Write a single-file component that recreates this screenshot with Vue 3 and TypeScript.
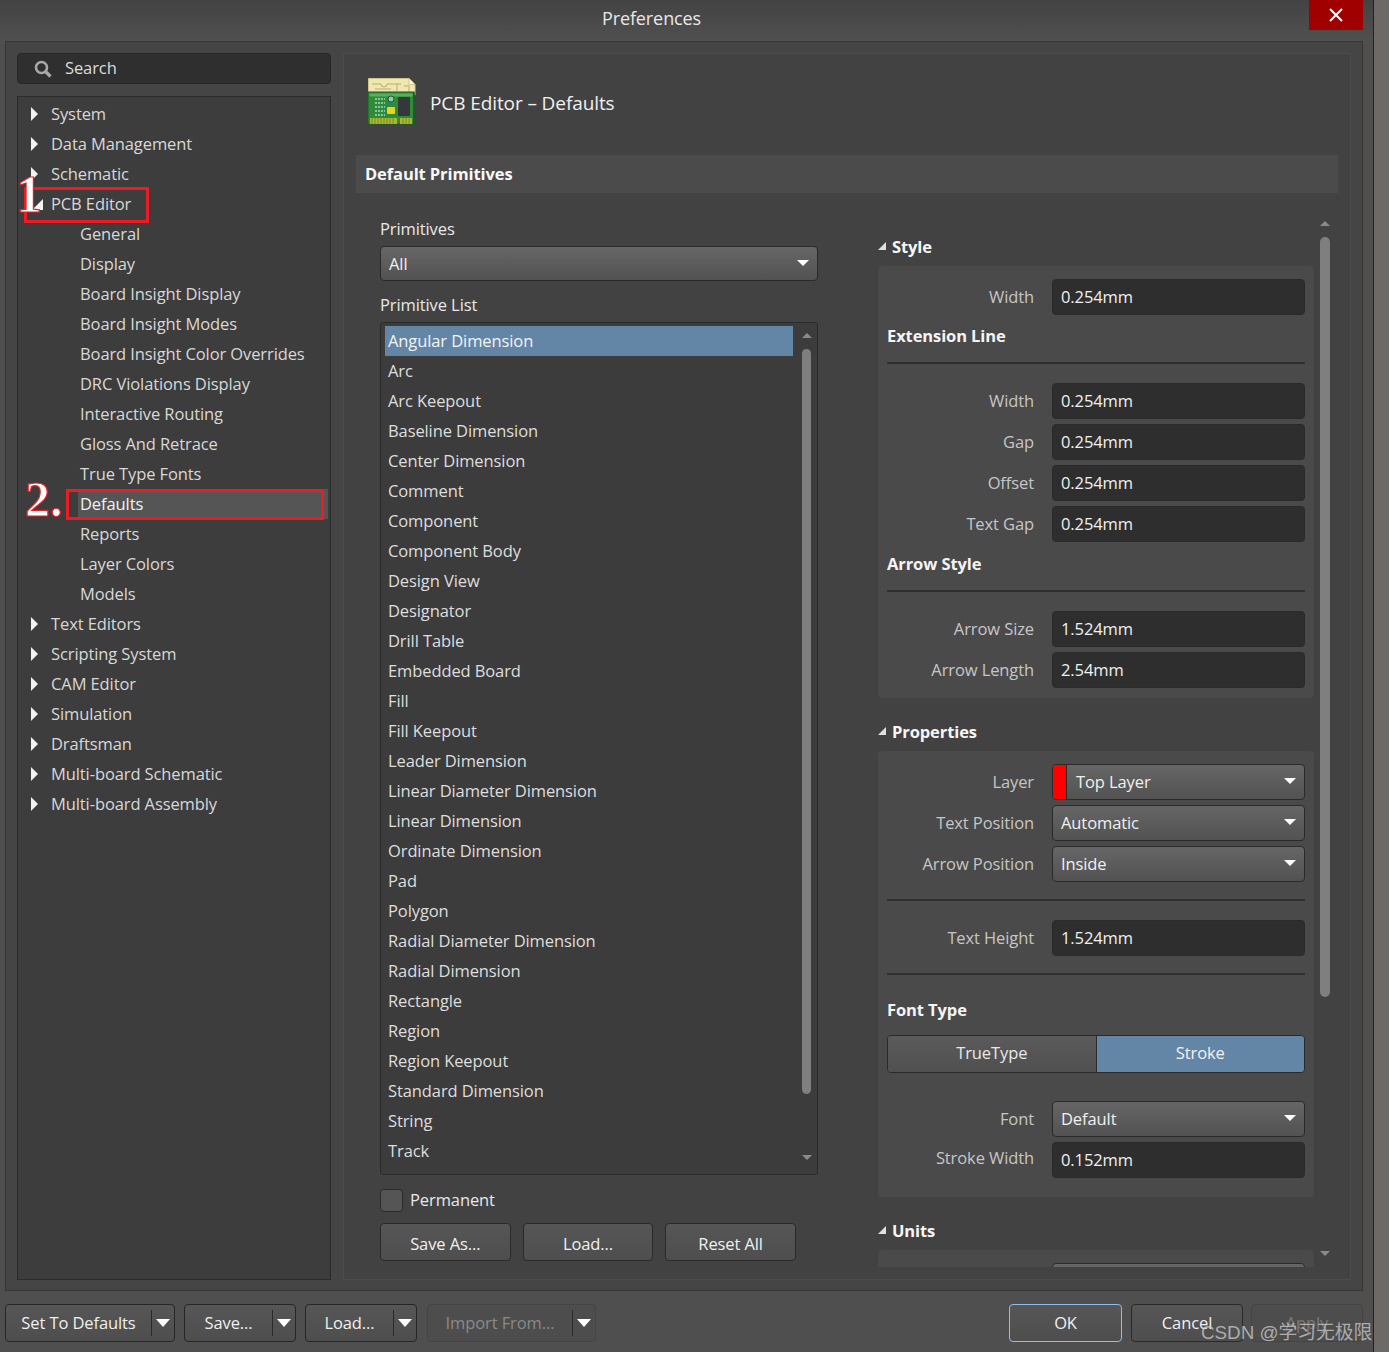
<script setup lang="ts">
interface TreeItem { label: string; level: number; arrow?: 'right' | 'open'; selected?: boolean }
const top1 = ['System', 'Data Management', 'Schematic']
const kids = ['General', 'Display', 'Board Insight Display', 'Board Insight Modes', 'Board Insight Color Overrides', 'DRC Violations Display', 'Interactive Routing', 'Gloss And Retrace', 'True Type Fonts', 'Defaults', 'Reports', 'Layer Colors', 'Models']
const top2 = ['Text Editors', 'Scripting System', 'CAM Editor', 'Simulation', 'Draftsman', 'Multi-board Schematic', 'Multi-board Assembly']
const tree: TreeItem[] = [
  ...top1.map((label) => ({ label, level: 0, arrow: 'right' as const })),
  { label: 'PCB Editor', level: 0, arrow: 'open' },
  ...kids.map((label) => ({ label, level: 1, selected: label === 'Defaults' })),
  ...top2.map((label) => ({ label, level: 0, arrow: 'right' as const })),
]
const primitives = ['Angular Dimension', 'Arc', 'Arc Keepout', 'Baseline Dimension', 'Center Dimension', 'Comment', 'Component', 'Component Body', 'Design View', 'Designator', 'Drill Table', 'Embedded Board', 'Fill', 'Fill Keepout', 'Leader Dimension', 'Linear Diameter Dimension', 'Linear Dimension', 'Ordinate Dimension', 'Pad', 'Polygon', 'Radial Diameter Dimension', 'Radial Dimension', 'Rectangle', 'Region', 'Region Keepout', 'Standard Dimension', 'String', 'Track']
const extRows = [['Width', '0.254mm'], ['Gap', '0.254mm'], ['Offset', '0.254mm'], ['Text Gap', '0.254mm']]
const arrowRows = [['Arrow Size', '1.524mm'], ['Arrow Length', '2.54mm']]
const propRows = [['Text Position', 'Automatic'], ['Arrow Position', 'Inside']]
const leftButtons = [
  { label: 'Set To Defaults', width: 170 },
  { label: 'Save...', width: 112 },
  { label: 'Load...', width: 112 },
  { label: 'Import From...', width: 169, disabled: true },
]
</script>

<template>
  <div class="root">
    <div class="window">
      <header class="titlebar">
        <span class="title">Preferences</span>
        <button class="close" aria-label="Close">
          <svg width="14" height="14" viewBox="0 0 14 14"><path d="M1 1 13 13M13 1 1 13" stroke="#fff" stroke-width="2" fill="none" /></svg>
        </button>
      </header>

      <main class="frame">
        <aside class="side">
          <div class="search">
            <svg width="18" height="18" viewBox="0 0 18 18"><circle cx="7.5" cy="7.5" r="5.5" fill="none" stroke="#a8a8a8" stroke-width="2.6" /><path d="M11.5 11.5 16.5 16.5" stroke="#a8a8a8" stroke-width="3.2" /></svg>
            <span>Search</span>
          </div>
          <nav class="tree">
            <div v-for="item in tree" :key="item.label" class="tree-row" :class="{ child: item.level === 1 }">
              <i v-if="item.arrow" class="tw" :class="item.arrow"></i>
              <span class="tree-label" :class="{ selected: item.selected }">{{ item.label }}</span>
            </div>
          </nav>
        </aside>

        <section class="panel">
          <div class="panel-head">
            <svg class="pcb" width="50" height="50" viewBox="0 0 50 50">
              <path d="M1.5 1.5H42L48 7.5V18H1.5Z" fill="#f0e6b0" stroke="#cfc48c" />
              <path d="M42 1.5V7.5H48" fill="#fff8d8" stroke="#cfc48c" />
              <path d="M5 7H14M20 7H34M14 7a3 3 0 0 0 6 0M30 7V14M37 9H42V15M8 12H24" stroke="#b8ad76" fill="none" />
              <rect x="1" y="15" width="46" height="32" fill="#2f8a3a" stroke="#1f5a25" />
              <rect x="2.5" y="16.5" width="43" height="3" fill="#5cad5c" />
              <path d="M8 22H18M8 26H18M8 30H18M8 34H18M8 38H18" stroke="#9fdcc0" stroke-width="1.4" stroke-dasharray="2 1" />
              <rect x="31" y="20" width="12" height="19" rx="1" fill="#33383a" />
              <rect x="20" y="30" width="8" height="7" rx="1" fill="#e6d420" />
              <circle cx="24" cy="22" r="3" fill="#8fc8c0" stroke="#1f5a25" />
              <rect x="3" y="41" width="27" height="6" fill="#a9b92f" />
              <rect x="33" y="41" width="12" height="6" fill="#a9b92f" />
              <path d="M5 41V47M8 41V47M11 41V47M14 41V47M17 41V47M20 41V47M23 41V47M26 41V47M36 41V47M39 41V47M42 41V47" stroke="#6f8020" stroke-width="0.8" />
              <path d="M47 15V50" stroke="#1f5a25" stroke-width="1.5" />
            </svg>
            <h1>PCB Editor – Defaults</h1>
          </div>
          <div class="section-bar">Default Primitives</div>

          <div class="body">
            <div class="col-left">
              <div class="lbl">Primitives</div>
              <div class="combo first-combo"><span>All</span><i class="caret"></i></div>
              <div class="lbl list-lbl">Primitive List</div>
              <div class="listbox">
                <ul class="items">
                  <li v-for="(p, i) in primitives" :key="p" :class="{ active: i === 0 }">{{ p }}</li>
                </ul>
                <div class="vbar list-bar">
                  <i class="up"></i>
                  <b class="thumb"></b>
                  <i class="down"></i>
                </div>
              </div>
              <label class="check"><i class="box"></i><span>Permanent</span></label>
              <div class="actions">
                <button class="btn">Save As...</button>
                <button class="btn">Load...</button>
                <button class="btn">Reset All</button>
              </div>
            </div>

            <div class="col-right">
              <div class="scroller">
                <h3 class="group first"><i class="tri"></i>Style</h3>
                <div class="card style-card">
                  <div class="row"><label>Width</label><div class="input">0.254mm</div></div>
                  <h4 class="sub">Extension Line</h4>
                  <hr />
                  <div class="rows after-hr">
                    <div v-for="r in extRows" :key="r[0]" class="row"><label>{{ r[0] }}</label><div class="input">{{ r[1] }}</div></div>
                  </div>
                  <h4 class="sub">Arrow Style</h4>
                  <hr />
                  <div class="rows after-hr">
                    <div v-for="r in arrowRows" :key="r[0]" class="row"><label>{{ r[0] }}</label><div class="input">{{ r[1] }}</div></div>
                  </div>
                </div>

                <h3 class="group"><i class="tri"></i>Properties</h3>
                <div class="card prop-card">
                  <div class="rows">
                    <div class="row">
                      <label>Layer</label>
                      <div class="combo layer"><b class="swatch"></b><span>Top Layer</span><i class="caret"></i></div>
                    </div>
                    <div v-for="r in propRows" :key="r[0]" class="row">
                      <label>{{ r[0] }}</label>
                      <div class="combo"><span>{{ r[1] }}</span><i class="caret"></i></div>
                    </div>
                  </div>
                  <hr class="gap-hr" />
                  <div class="row after-hr"><label>Text Height</label><div class="input">1.524mm</div></div>
                  <hr class="gap-hr" />
                  <h4 class="sub font-type">Font Type</h4>
                  <div class="segments">
                    <span>TrueType</span>
                    <span class="on">Stroke</span>
                  </div>
                  <div class="rows font-rows">
                    <div class="row"><label>Font</label><div class="combo"><span>Default</span><i class="caret"></i></div></div>
                    <div class="row lift"><label>Stroke Width</label><div class="input">0.152mm</div></div>
                  </div>
                </div>

                <h3 class="group"><i class="tri"></i>Units</h3>
                <div class="card units-card">
                  <div class="row"><label></label><div class="combo"></div></div>
                </div>
              </div>
              <div class="vbar main-bar">
                <i class="up"></i>
                <b class="thumb"></b>
                <i class="down"></i>
              </div>
            </div>
          </div>
        </section>
      </main>

      <footer class="bottom">
        <div class="bottom-left">
          <div v-for="b in leftButtons" :key="b.label" class="split" :class="{ disabled: b.disabled }" :style="{ width: b.width + 'px' }">
            <span class="split-text">{{ b.label }}</span>
            <span class="split-arrow"><i class="caret"></i></span>
          </div>
        </div>
        <div class="bottom-right">
          <button class="btn foot ok">OK</button>
          <button class="btn foot">Cancel</button>
          <button class="btn foot off">Apply</button>
        </div>
      </footer>
    </div>
    <div class="strip"></div>

    <div class="mark mark-a"></div>
    <div class="mark mark-b"></div>
    <span class="num num-a">1</span>
    <span class="num num-b">2.</span>
    <span class="watermark">CSDN @学习无极限</span>
  </div>
</template>

<style>
html, body { margin: 0; padding: 0; background: #4f4f4f; }
</style>

<style scoped>
* { box-sizing: border-box; }
.root { position: relative; width: 1389px; height: 1352px; display: flex; overflow: hidden; font-family: "Open Sans", "Noto Sans", sans-serif; font-size: 16.5px; letter-spacing: -0.1px; color: #e4e4e4; }
.window { width: 1374px; height: 1352px; display: flex; flex-direction: column; background: #4f4f4f; border-right: 1px solid #222; }
.strip { flex: 1; background: #6d6967; }

.titlebar { position: relative; height: 41px; flex: none; display: flex; justify-content: center; background: linear-gradient(#434343, #505050); }
.title { margin: 6px 0 0 -70px; font-size: 18px; line-height: 24px; color: #e8e8e8; }
.close { position: absolute; left: 1309px; top: 0; width: 54px; height: 30px; padding: 0; border: 0; background: #a00000; display: flex; align-items: center; justify-content: center; }

.frame { width: 1358px; height: 1250px; margin-left: 5px; flex: none; padding: 12px 12px 10px; display: flex; gap: 12px; background: #454545; border: 1px solid #363636; }
.side { width: 314px; margin-left: -1px; margin-top: -1px; flex: none; display: flex; flex-direction: column; gap: 12px; }
.search { height: 31px; display: flex; align-items: center; gap: 13px; padding-left: 16px; background: #2f2f2f; border: 1px solid #262626; border-radius: 4px; color: #dcdcdc; }
.search span { margin-top: -2px; }
.tree { flex: 1; padding-top: 2px; background: #3d3d3d; border: 1px solid #2a2a2a; }
.tree-row { position: relative; height: 30px; display: flex; align-items: center; padding-left: 31px; color: #d8d8d8; }
.tree-row.child { padding-left: 60px; }
.tree-label { height: 30px; line-height: 30px; padding: 0 2px; flex: none; }
.tree-label.selected { flex: 1; margin-right: 2px; background: #555; color: #f2f2f2; }
.tw { position: absolute; left: 13px; top: 8px; width: 0; height: 0; border-style: solid; border-color: transparent transparent transparent #f2f2f2; border-width: 7px 0 7px 7px; }
.tw.open { left: 14px; top: 10px; border-width: 0 0 11px 11px; border-color: transparent transparent #f2f2f2 transparent; }

.panel { width: 1008px; margin-top: -1px; margin-right: -1px; padding: 0 12px; flex: none; display: flex; flex-direction: column; background: #424242; border: 1px solid #4c4c4c; }
.panel-head { height: 101px; flex: none; display: flex; align-items: center; gap: 13px; padding: 0 0 0 11px; }
.pcb { margin-top: -5px; }
.panel-head h1 { margin: -3px 0 0; font-size: 19px; font-weight: 400; color: #f0f0f0; }
.section-bar { height: 38px; flex: none; padding-left: 9px; line-height: 38px; background: #4b4b4b; font-weight: 700; color: #f8f8f8; }
.body { flex: 1; display: flex; min-height: 0; }

.col-left { width: 522px; padding: 26px 60px 0 24px; flex: none; }
.lbl { line-height: 20px; height: 20px; color: #e8e8e8; }
.list-lbl { margin-top: 14px; }
.combo { position: relative; height: 35px; display: flex; align-items: center; padding-left: 8px; background: linear-gradient(#666, #525252); border: 1px solid #2a2a2a; border-radius: 4px; color: #f0f0f0; }
.row .combo span { margin-top: -2px; }
.first-combo { margin-top: 7px; }
.caret { position: absolute; right: 8px; top: 13px; width: 0; height: 0; border-style: solid; border-width: 6px 6px 0; border-color: #fff transparent transparent; }
.listbox { position: relative; height: 853px; margin-top: 7px; background: #3c3c3c; border: 1px solid #2a2a2a; border-radius: 3px; padding: 3px 0 0 4px; display: flex; }
.items { width: 408px; margin: 0; padding: 0; list-style: none; flex: none; }
.items li { height: 30px; line-height: 30px; padding-left: 3px; color: #dedede; }
.items li.active { background: #6385a6; color: #f4f4f4; }
.vbar { display: flex; flex-direction: column; align-items: center; }
.list-bar { width: 9px; margin-left: 9px; height: 845px; }
.up, .down { flex: none; width: 0; height: 0; border-style: solid; border-color: transparent; }
.up { border-width: 0 5px 5px; border-bottom-color: #8a8a8a; }
.down { border-width: 5px 5px 0; border-top-color: #8a8a8a; }
.thumb { display: block; width: 9px; border-radius: 5px; background: #7f7f7f; }
.list-bar .up { margin-top: 7px; }
.list-bar .thumb { margin-top: 11px; height: 745px; }
.list-bar .down { margin-top: 61px; }
.check { display: flex; align-items: center; gap: 7px; height: 24px; margin-top: 13px; color: #e8e8e8; }
.check span { margin-top: -2px; }
.box { width: 23px; height: 23px; border: 1px solid #2a2a2a; border-radius: 4px; background: #555; }
.actions { display: flex; gap: 12px; margin-top: 11px; }
.btn { width: 130.67px; height: 38px; padding: 2px 0 0; background: linear-gradient(#565656, #4e4e4e); border: 1px solid #2a2a2a; border-radius: 4px; font: inherit; letter-spacing: inherit; color: #f0f0f0; }

.col-right { flex: 1; display: flex; gap: 6px; min-width: 0; }
.scroller { width: 436px; height: 1074px; overflow: hidden; padding-top: 44px; flex: none; }
.group { display: flex; align-items: center; height: 20px; padding-bottom: 2px; margin: 24px 0 9px; font-size: 16.5px; font-weight: 700; color: #f6f6f6; }
.group.first { margin-top: 0; }
.tri { width: 0; height: 0; margin-right: 6px; border-style: solid; border-width: 0 0 8px 8px; border-color: transparent transparent #e0e0e0 transparent; }
.card { padding: 13px 9px 10px; background: #4a4a4a; border-radius: 4px; }
.prop-card { padding-bottom: 19px; }
.rows { display: flex; flex-direction: column; gap: 5px; }
.row { display: grid; grid-template-columns: 147px 253px; column-gap: 18px; align-items: center; }
.row label { text-align: right; color: #c6c6c6; margin-top: -2px; }
.row.lift label { margin-top: -6px; }
.input { height: 36px; padding-left: 8px; line-height: 33px; background: #2e2e2e; border: 1px solid #2a2a2a; border-radius: 4px; color: #f0f0f0; }
.row .combo { height: 36px; }
.sub { height: 20px; line-height: 20px; margin: 11px 0 16px; font-size: 16.5px; font-weight: 700; color: #f4f4f4; }
.rows + .sub { margin-top: 12px; }
hr { height: 2px; margin: 0; border: 0; background: #2f2f2f; }
.after-hr { margin-top: 19px; }
.gap-hr { margin-top: 17px; }
.layer { padding-left: 0; overflow: hidden; }
.swatch { width: 13px; height: 100%; margin-right: 9px; background: #f00; border-right: 1px solid #2a2a2a; box-sizing: content-box; }
.font-type { margin: 25px 0 15px; }
.segments { height: 38px; display: flex; border: 1px solid #2a2a2a; border-radius: 4px; overflow: hidden; background: #555; }
.segments span { flex: 1; display: flex; align-items: center; justify-content: center; padding-bottom: 4px; background: linear-gradient(#5a5a5a, #505050); color: #e8e8e8; }
.segments span.on { background: #6385a6; color: #f2f2f2; border-left: 1px solid #2a2a2a; }
.font-rows { margin-top: 28px; }
.units-card { height: 60px; }
.main-bar { width: 10px; height: 1074px; }
.main-bar .up { margin-top: 28px; }
.main-bar .thumb { width: 10px; margin-top: 11px; height: 760px; }
.main-bar .down { margin-top: 254px; }

.bottom { flex: 1; display: flex; justify-content: space-between; padding: 13px 10px 10px 5px; }
.bottom-left, .bottom-right { display: flex; gap: 9px; }
.bottom-left .split:last-child { margin-left: 1px; }
.split { position: relative; height: 38px; display: flex; background: linear-gradient(#565656, #4e4e4e); border: 1px solid #262626; border-radius: 4px; color: #f0f0f0; }
.split-text { flex: 1; display: flex; align-items: center; justify-content: center; padding-bottom: 1px; }
.split-arrow { position: relative; width: 23px; flex: none; }
.split-arrow::before { content: ""; position: absolute; left: 0; top: 5px; bottom: 5px; width: 1px; background: #2a2a2a; }
.split-arrow .caret { left: 5px; right: auto; top: 14px; border-width: 8px 7px 0; }
.split.disabled { background: #4d4d4d; border-color: #444; color: #8a8a8a; }
.foot { width: 112px; padding: 0 0 2px; }
.ok { width: 113px; border-color: #8fbfe8; }
.off { margin-left: -1px; background: #4d4d4d; border-color: #444; color: #7a7a7a; }

.mark { position: absolute; border: 3px solid #ed1c24; pointer-events: none; }
.mark-a { left: 24px; top: 187px; width: 125px; height: 36px; }
.mark-b { left: 66px; top: 489px; width: 258px; height: 31px; }
.num { position: absolute; font-family: "Liberation Serif", serif; font-weight: 700; color: #fff; -webkit-text-stroke: 1.2px #ed1c24; letter-spacing: 0; line-height: 1; }
.num-a { left: 16px; top: 169px; font-size: 52px; }
.num-b { left: 25px; top: 474px; font-size: 50px; }
.watermark { position: absolute; left: 1201px; top: 1321px; font-family: "Liberation Sans", "Noto Sans CJK SC", sans-serif; font-size: 18.8px; line-height: 24px; letter-spacing: 0; color: rgba(205, 205, 205, 0.75); white-space: nowrap; }
</style>
